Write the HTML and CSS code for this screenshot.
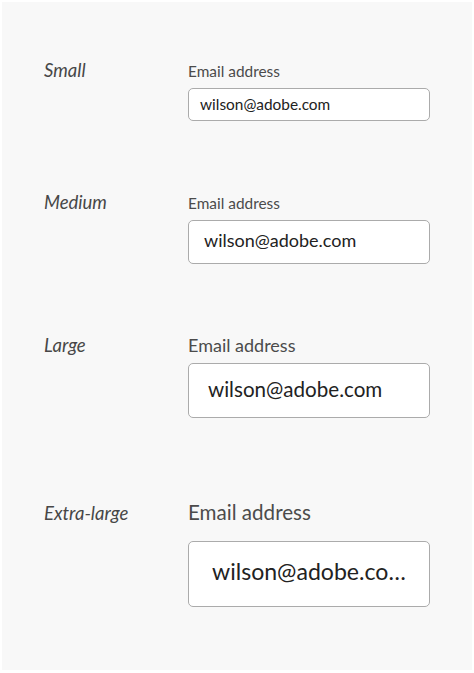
FILE: index.html
```html
<!DOCTYPE html>
<html lang="en">
<head>
<meta charset="utf-8">
<title>Text field sizes</title>
<link rel="stylesheet" href="styles.css">
</head>
<body>
<main class="panel">
  <section class="row row-s">
    <div class="size-name">Small</div>
    <div class="field">
      <div class="field-label">Email address</div>
      <div class="textfield">wilson@adobe.com</div>
    </div>
  </section>
  <section class="row row-m">
    <div class="size-name">Medium</div>
    <div class="field">
      <div class="field-label">Email address</div>
      <div class="textfield">wilson@adobe.com</div>
    </div>
  </section>
  <section class="row row-l">
    <div class="size-name">Large</div>
    <div class="field">
      <div class="field-label">Email address</div>
      <div class="textfield">wilson@adobe.com</div>
    </div>
  </section>
  <section class="row row-xl">
    <div class="size-name">Extra-large</div>
    <div class="field">
      <div class="field-label">Email address</div>
      <div class="textfield">wilson@adobe.com</div>
    </div>
  </section>
</main>
</body>
</html>
```
FILE: styles.css
```css
html, body {
  margin: 0;
  padding: 0;
  background: #ffffff;
}

body {
  font-family: "Lato", "Liberation Sans", sans-serif;
}

.panel {
  margin: 2px;
  width: 470px;
  height: 668px;
  box-sizing: border-box;
  background: #f8f8f8;
  padding: 59px 0 0 42px;
  display: flex;
  flex-direction: column;
}

.row {
  display: grid;
  grid-template-columns: 144px 242px;
  align-items: baseline;
}

.size-name {
  font-style: italic;
  font-size: 18.5px;
  line-height: 17px;
  color: #474747;
}

.field {
  display: flex;
  flex-direction: column;
}

.field-label {
  color: #4b4b4b;
  white-space: nowrap;
}

.textfield {
  box-sizing: border-box;
  width: 242px;
  border: 1px solid #ababab;
  border-radius: 5px;
  background: #ffffff;
  color: #222222;
  white-space: nowrap;
  overflow: hidden;
  text-overflow: ellipsis;
}

/* Small */
.row-s .field-label { font-size: 15.4px; line-height: 20px; margin-bottom: 7px; }
.row-s .textfield { height: 33px; line-height: 31px; font-size: 15.4px; padding: 0 11px; }

/* Medium */
.row-m { margin-top: 72px; }
.row-m .field-label { font-size: 15.4px; line-height: 20px; margin-bottom: 7px; }
.row-m .textfield { height: 44px; line-height: 39px; font-size: 18px; padding: 0 15px; }

/* Large */
.row-l { margin-top: 69px; }
.row-l .field-label { font-size: 18px; line-height: 24px; margin-bottom: 6px; }
.row-l .textfield { height: 55px; line-height: 51px; font-size: 20.6px; padding: 0 19px; }

/* Extra-large */
.row-xl { margin-top: 81px; }
.row-xl .field-label { font-size: 20.6px; line-height: 26px; margin-bottom: 16px; }
.row-xl .textfield { height: 66px; line-height: 58px; font-size: 23.1px; padding: 0 23px; }
```
